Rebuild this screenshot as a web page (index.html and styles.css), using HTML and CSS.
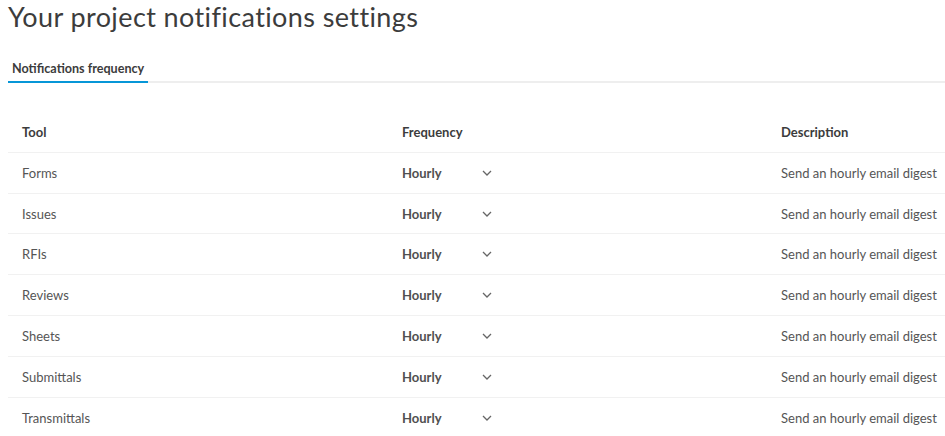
FILE: index.html
```html
<!DOCTYPE html>
<html lang="en">
<head>
<meta charset="utf-8">
<title>Your project notifications settings</title>
<link rel="stylesheet" href="styles.css">
</head>
<body>
<div class="page">
  <h1 class="title">Your project notifications settings</h1>
  <div class="tabs">
    <div class="tab active">Notifications frequency</div>
  </div>
  <div class="table">
    <div class="row head">
      <div class="cell c1">Tool</div>
      <div class="cell c2">Frequency</div>
      <div class="cell c3">Description</div>
    </div>
    <div class="row"><div class="cell c1">Forms</div><div class="cell c2"><span class="sel">Hourly</span><svg class="chev" viewBox="0 0 10 6"><path d="M1 1l4 4 4-4"/></svg></div><div class="cell c3">Send an hourly email digest</div></div>
    <div class="row"><div class="cell c1">Issues</div><div class="cell c2"><span class="sel">Hourly</span><svg class="chev" viewBox="0 0 10 6"><path d="M1 1l4 4 4-4"/></svg></div><div class="cell c3">Send an hourly email digest</div></div>
    <div class="row"><div class="cell c1">RFIs</div><div class="cell c2"><span class="sel">Hourly</span><svg class="chev" viewBox="0 0 10 6"><path d="M1 1l4 4 4-4"/></svg></div><div class="cell c3">Send an hourly email digest</div></div>
    <div class="row"><div class="cell c1">Reviews</div><div class="cell c2"><span class="sel">Hourly</span><svg class="chev" viewBox="0 0 10 6"><path d="M1 1l4 4 4-4"/></svg></div><div class="cell c3">Send an hourly email digest</div></div>
    <div class="row"><div class="cell c1">Sheets</div><div class="cell c2"><span class="sel">Hourly</span><svg class="chev" viewBox="0 0 10 6"><path d="M1 1l4 4 4-4"/></svg></div><div class="cell c3">Send an hourly email digest</div></div>
    <div class="row"><div class="cell c1">Submittals</div><div class="cell c2"><span class="sel">Hourly</span><svg class="chev" viewBox="0 0 10 6"><path d="M1 1l4 4 4-4"/></svg></div><div class="cell c3">Send an hourly email digest</div></div>
    <div class="row"><div class="cell c1">Transmittals</div><div class="cell c2"><span class="sel">Hourly</span><svg class="chev" viewBox="0 0 10 6"><path d="M1 1l4 4 4-4"/></svg></div><div class="cell c3">Send an hourly email digest</div></div>
  </div>
</div>
</body>
</html>
```
FILE: styles.css
```css
html, body { margin: 0; padding: 0; background: #fff; }
body { font-family: Lato, "Noto Sans", sans-serif; color: #3c3c3c; overflow: hidden; }
.page { padding: 0 0 0 8px; }
.title {
  margin: 0;
  padding-top: 1px;
  font-size: 27px;
  font-weight: 400;
  line-height: 32px;
  color: #3c3c3c;
  letter-spacing: 0.4px;
}
.tabs {
  margin-top: 25px;
  border-bottom: 2px solid #eeeeee;
  display: flex;
}
.tab {
  padding: 0 4px 0 4px;
  font-size: 12.6px;
  font-weight: 700;
  line-height: 22px;
  color: #3c3c3c;
  margin-bottom: -2px;
}
.tab.active { border-bottom: 2px solid #0696d7; padding-bottom: 1px; }
.table { margin-top: 29px; }
.row {
  display: grid;
  grid-template-columns: 380px 379px 1fr;
  height: 40.83px;
  box-sizing: border-box;
  align-items: center;
  border-bottom: 1px solid #f1f1f1;
}
.row:last-child { border-bottom: none; }
.cell { padding-left: 14px; font-size: 13px; color: #555; white-space: nowrap; display: flex; align-items: center; }
.head .cell { font-weight: 700; color: #3c3c3c; }
.sel { width: 80px; font-weight: 700; color: #505050; }
.chev { width: 10px; height: 6px; fill: none; stroke: #666; stroke-width: 1.3; }
```
